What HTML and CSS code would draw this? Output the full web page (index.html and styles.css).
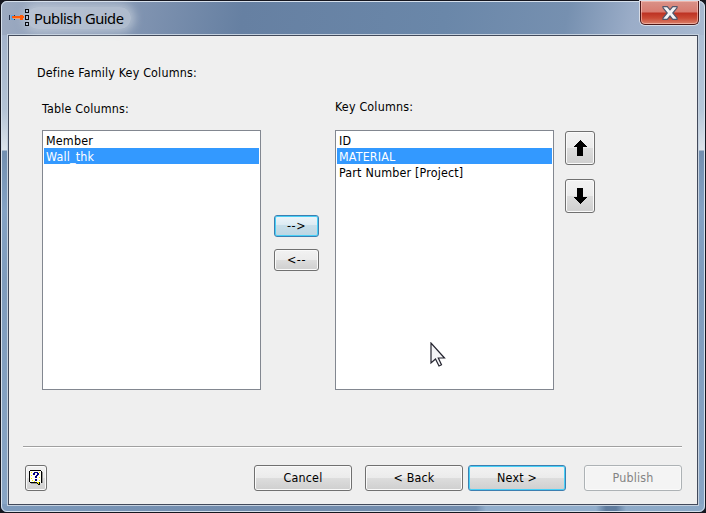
FILE: index.html
```html
<!DOCTYPE html>
<html lang="en">
  <head>
    <title>Publish Guide</title>
    <meta charset="UTF-8" />
    <meta name="viewport" content="width=device-width, initial-scale=1.0" />
    <link rel="stylesheet" href="styles.css">
  </head>
  <body>
    <div class="window">
      <header class="titlebar">
        <svg class="app-icon" width="20" height="18" viewBox="0 0 20 18">
          <path d="M0 6h1v5H0z" fill="#26334c" />
          <path d="M2 6h3v5H2z" fill="#5aa4e4" />
          <path d="M5 6h1v5H5z" fill="#26334c" />
          <path d="M3 7h12v2H3zM11 6h3v5h-3z" fill="#ff5a08" />
          <path d="M4 9h7v1H4z" fill="#eea070" />
          <path d="M16 0h4v4h-4zM16 6h4v5h-4zM16 13h4v4h-4z" fill="#080a10" />
          <path d="M17 1h2v2h-2zM17 7h2v3h-2zM17 14h2v2h-2z" fill="#b6c3d6" />
        </svg>
        <h1 class="title">Publish Guide</h1>
        <button class="close" aria-label="Close">
          <svg width="16" height="14" viewBox="0 0 16 14">
            <path d="M1 .7h4.300L8 3.800 10.700.7H15v1.100L10.800 7l4.200 5v1.300h-4.300L8 10l-2.700 3.300H1V12l4.200-5L1 1.800z" fill="#f3f3f5" stroke="#50566c" stroke-width="1.200" />
          </svg>
        </button>
      </header>

      <main class="client">
        <p class="heading">Define Family Key Columns:</p>

        <div class="picker">
          <div class="column">
            <p class="label">Table Columns:</p>
            <ul class="list">
              <li>Member</li>
              <li class="selected">Wall_thk</li>
            </ul>
          </div>

          <div class="transfer">
            <button class="btn hot">--&gt;</button>
            <button class="btn">&lt;--</button>
          </div>

          <div class="column">
            <p class="label raised">Key Columns:</p>
            <ul class="list">
              <li>ID</li>
              <li class="selected">MATERIAL</li>
              <li>Part Number [Project]</li>
            </ul>
          </div>

          <div class="order">
            <button class="btn" aria-label="Move up">
              <svg width="14" height="16" viewBox="0 0 14 16" shape-rendering="crispEdges">
                <path d="M7 0l7 7h-4v9H4V7H0z" />
              </svg>
            </button>
            <button class="btn" aria-label="Move down">
              <svg width="14" height="16" viewBox="0 0 14 16" shape-rendering="crispEdges">
                <path d="M7 16l7-7h-4V0H4v9H0z" />
              </svg>
            </button>
          </div>
        </div>

        <footer class="footer">
          <button class="btn help" aria-label="Help">
            <svg width="14" height="16" viewBox="0 0 14 16" shape-rendering="crispEdges">
              <path d="M2 13h7v1H2zM13 2h1v11h-1z" fill="#999" />
              <path d="M1 1h11v12H1z" fill="#fffff4" />
              <path d="M1 0h11v1H1zM0 1h1v11H0zM12 1h1v12h-1zM1 12h7v1H1zM8 13h1v1H8zM9 14h2v1H9zM10 12h1v2h-1z" />
              <path d="M2 2h1v1H2zM2 5h1v1H2zM2 8h1v1H2zM3 10h1v1H3zM10 2h1v1h-1zM10 7h1v1h-1zM10 10h1v1h-1zM5 11h1v1H5zM8 12h2v1H8zM9 13h1v1H9z" fill="#f4f000" />
              <path d="M5 2h4v1H5zM4 3h2v2H4zM8 3h2v2H8zM7 5h2v1H7zM6 6h2v2H6zM6 9h2v2H6z" fill="#000080" />
            </svg>
          </button>
          <button class="btn cancel">Cancel</button>
          <button class="btn back">&lt; Back</button>
          <button class="btn default">Next &gt;</button>
          <button class="btn publish" disabled>Publish</button>
        </footer>
      </main>

      <svg class="cursor" width="16" height="25" viewBox="0 0 16 25">
        <path d="M1 1v20l4.500-4 3.500 7 2.500-1.200L8.300 16H14.500z" fill="#f4f4f6" stroke="#24242f" stroke-width="1.200" />
      </svg>
    </div>
  </body>
</html>
```
FILE: styles.css
```css
* {
  margin: 0;
  padding: 0;
  box-sizing: border-box;
}

body {
  width: 706px;
  height: 513px;
  overflow: hidden;
  background: #15161f;
  font-family: 'DejaVu Sans Condensed', 'DejaVu Sans', sans-serif;
  font-stretch: condensed;
  font-size: 12.4px;
  line-height: 16px;
  letter-spacing: 0.18px;
  color: #000;
}

/* Glass frame */
.window {
  position: relative;
  width: 706px;
  height: 513px;
  padding: 1px 6px 6px 7px;
  border: 1px solid #15161f;
  border-radius: 7px;
  background:
    linear-gradient(#a3b3cb, #b4c3d5 75px, #dce3ea 115px, transparent 116px) 0 34px / 8px 118px no-repeat,
    linear-gradient(#acbed4, #b4c7d9 75px, #dce3ea 115px, transparent 116px) 100% 34px / 8px 118px no-repeat,
    linear-gradient(100deg, #9caac1 0, #8295b2 130px, #6680a2 240px, #6a87a9 440px, #7690b0 560px, #9badc8 625px, #a8b9d0 100%) 0 0 / 100% 36px no-repeat,
    linear-gradient(90deg, #7e9bbd, #728cad 220px, #728cad 475px, #92aecc 485px, #92aecc 595px, #607c9e 605px, #607c9e 615px, #8fabc9 625px, #8ba8c6) 0 100% / 100% 8px no-repeat,
    linear-gradient(#6e87a6, #637f9f 100px, #84a2c4 210px, #7f9cbd 280px, #88a5c5);
}

.window::after {
  content: '';
  position: absolute;
  inset: 0;
  border: 1px solid #d6e0ec;
  border-radius: 6px;
  pointer-events: none;
}

.titlebar {
  display: flex;
  height: 33px;
  padding-left: 1px;
}

.app-icon {
  position: relative;
  z-index: 1;
  margin-top: 7px;
}

.title {
  margin: 5px 0 0 -2px;
  padding: 0 7px;
  height: 22px;
  border-radius: 12px;
  background: rgba(205, 214, 224, 0.6);
  box-shadow: 0 0 9px 4px rgba(205, 214, 224, 0.6);
  font-family: 'Noto Sans', 'Open Sans', sans-serif;
  font-size: 14.7px;
  font-weight: 400;
  line-height: 22px;
  letter-spacing: -0.45px;
  white-space: nowrap;
}

.close {
  position: relative;
  z-index: 1;
  display: flex;
  align-items: center;
  justify-content: center;
  width: 59px;
  height: 24px;
  margin: -1px 0 0 auto;
  border: 1px solid #4c1717;
  border-top: 0;
  border-radius: 0 0 5px 5px;
  background: linear-gradient(#d99289, #d87b70 11px, #bd3223 12px, #ca4934 17px, #da806a);
  box-shadow: 0 0 0 1px #d8dce6, inset 0 0 0 1px rgba(255, 210, 200, 0.55);
}

.client {
  display: flex;
  flex-direction: column;
  width: 690px;
  height: 470px;
  padding: 29px 15px 13px 14px;
  border: 1px solid #424a5b;
  background: #efefef;
  box-shadow: 0 0 0 1px #c5d1df;
}

.heading {
  margin-left: 14px;
}

.picker {
  display: flex;
  margin: 20px 0 0 19px;
}

.column {
  width: 219px;
}

.label {
  height: 29px;
}

.raised {
  margin-top: -2px;
  height: 31px;
}

.list {
  height: 260px;
  padding: 1px;
  border: 1px solid #828790;
  background: #fff;
  list-style: none;
}

.list li {
  height: 16px;
  padding-left: 2px;
  line-height: 18px;
}

.list .selected {
  background: #3399ff;
  color: #fff;
}

.btn {
  display: flex;
  align-items: center;
  justify-content: center;
  border: 1px solid #707070;
  border-radius: 3px;
  background: linear-gradient(#f2f2f2, #ebebeb 50%, #dddddd 50%, #cfcfcf);
  box-shadow: inset 0 0 0 1px #fafafa;
  color: #000;
  font: inherit;
  letter-spacing: inherit;
}

.hot {
  border-color: #3c7fb1;
  background: linear-gradient(#edf5fa, #dcebf3 45%, #c8dfea 46%, #bcd6e3);
  box-shadow: inset 0 0 0 1px #48d0f7;
}

.default {
  border-color: #3c7fb1;
  box-shadow: inset 0 0 0 1px #48d0f7;
}

.transfer {
  display: flex;
  flex-direction: column;
  gap: 12px;
  width: 45px;
  margin: 114px 16px 0 13px;
}

.transfer .btn {
  height: 22px;
  letter-spacing: 0.6px;
}

.order {
  display: flex;
  flex-direction: column;
  gap: 14px;
  width: 30px;
  margin: 30px 0 0 11px;
}

.order .btn {
  height: 34px;
}

.footer {
  display: flex;
  margin-top: auto;
  padding-top: 18px;
  border-top: 1px solid #a0a0a0;
  box-shadow: inset 0 1px 0 #fff;
}

.footer .btn {
  width: 98px;
  height: 26px;
}

.footer .help {
  width: 22px;
  margin-left: 2px;
}

.cancel {
  margin-left: 207px;
}

.back {
  margin: 0 5px 0 13px;
}

.publish {
  margin-left: 18px;
}

.btn:disabled {
  border-color: #adb2b5;
  background: #f4f4f4;
  color: #838383;
}

/* Mouse pointer over the key list */
.cursor {
  position: absolute;
  left: 429px;
  top: 341px;
}
```
